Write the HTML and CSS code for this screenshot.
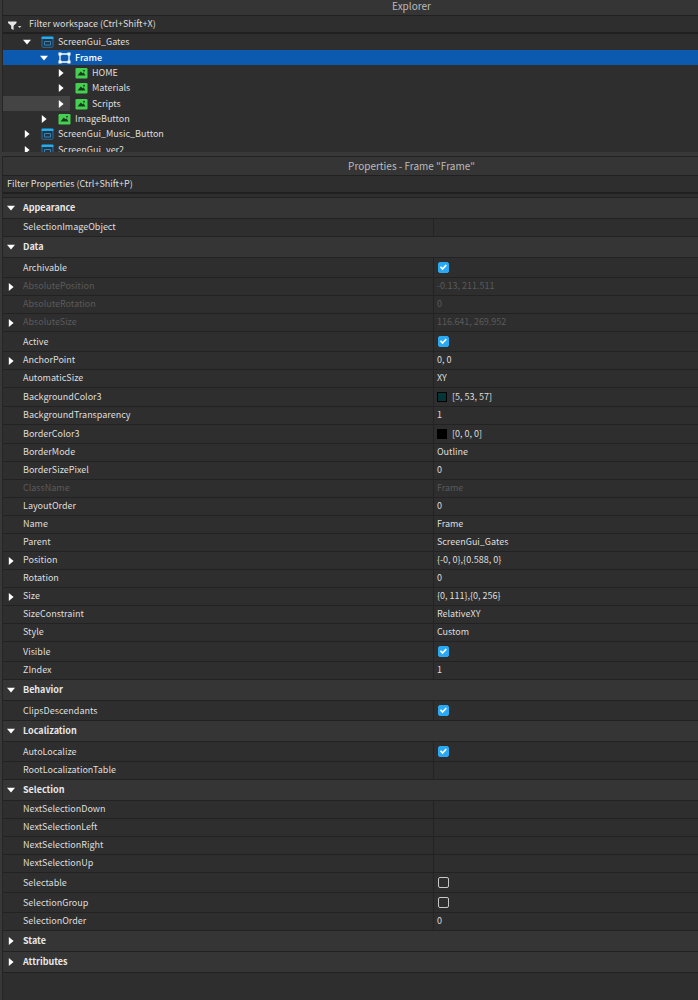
FILE: index.html
```
<!DOCTYPE html>
<html lang="en">
<head>
<meta charset="utf-8">
<title>Explorer and Properties</title>
<link rel="stylesheet" href="styles.css">
</head>
<body>
<svg class="defs" aria-hidden="true">
  <symbol id="down" viewBox="0 0 8 8"><path d="M0 1.800h8L4 6.600z" fill="#fff"/></symbol>
  <symbol id="right" viewBox="0 0 8 8"><path d="M1.800 0v8L6.600 4z" fill="#fff"/></symbol>
  <symbol id="gui" viewBox="0 0 13 12"><path d="M1 3v7.500q0 .8.8.8h9.400q.8 0 .8-.8V3" fill="#27333d" stroke="#296da3"/><path d="M.5 3V1.600q0-1.100 1.100-1.100h9.800q1.100 0 1.100 1.100V3z" fill="#20aef5"/><path d="M3.500 5.500h6v3.500h-6z" fill="none" stroke="#3585bd"/></symbol>
  <symbol id="frame" viewBox="0 0 13 12"><path d="M2 2h9v8H2z" fill="none" stroke="#fff" stroke-width="1.300"/><path d="M.5.500h3v3h-3zM9.500.500h3v3h-3zM.5 8.500h3v3h-3zM9.500 8.500h3v3h-3z" fill="#fff"/></symbol>
  <symbol id="image" viewBox="0 0 13 12"><rect x=".5" y="1" width="12" height="10.500" rx="1.200" fill="#46d052"/><path d="M2.500 8.500 5.800 4.500l1.700 1.700 1-1 2 3.300z" fill="#183b1e"/><circle cx="9" cy="3.700" r=".9" fill="#183b1e"/></symbol>
</svg>
<main class="dock">
  <section class="explorer">
    <h2 class="title">Explorer</h2>
    <div class="filter">
      <button class="funnel" aria-label="Filter options"><svg viewBox="0 0 14 9"><path d="M0 .5h8.500v1.600L5.600 4.800V9L3.200 7.800v-3L0 2.100z" fill="#e4e4e4"/><path d="M9.800 5h3.700l-1.850 2z" fill="#ccc"/></svg></button>
      <input class="search" type="text" aria-label="Filter workspace" placeholder="Filter workspace (Ctrl+Shift+X)">
    </div>
    <ul class="tree" role="tree">
      <li class="node" role="treeitem"><svg class="arrow"><use href="#down"/></svg><svg class="icon"><use href="#gui"/></svg><span>ScreenGui_Gates</span></li>
      <li class="node level-1 selected" role="treeitem" aria-selected="true"><svg class="arrow"><use href="#down"/></svg><svg class="icon"><use href="#frame"/></svg><span>Frame</span></li>
      <li class="node level-2" role="treeitem"><svg class="arrow"><use href="#right"/></svg><svg class="icon"><use href="#image"/></svg><span>HOME</span></li>
      <li class="node level-2" role="treeitem"><svg class="arrow"><use href="#right"/></svg><svg class="icon"><use href="#image"/></svg><span>Materials</span></li>
      <li class="node level-2 hovered" role="treeitem"><svg class="arrow"><use href="#right"/></svg><svg class="icon"><use href="#image"/></svg><span>Scripts</span></li>
      <li class="node level-1" role="treeitem"><svg class="arrow"><use href="#right"/></svg><svg class="icon"><use href="#image"/></svg><span>ImageButton</span></li>
      <li class="node" role="treeitem"><svg class="arrow"><use href="#right"/></svg><svg class="icon"><use href="#gui"/></svg><span>ScreenGui_Music_Button</span></li>
      <li class="node" role="treeitem"><svg class="arrow"><use href="#right"/></svg><svg class="icon"><use href="#gui"/></svg><span>ScreenGui_ver2</span></li>
    </ul>
  </section>
  <section class="properties">
    <h2 class="title title-properties">Properties - Frame "Frame"</h2>
    <div class="filter filter-properties">
      <input class="search" type="text" aria-label="Filter properties" placeholder="Filter Properties (Ctrl+Shift+P)">
    </div>
    <table class="grid">
      <colgroup><col class="col-name"><col></colgroup>
      <tbody>
        <tr class="group"><th colspan="2"><button class="toggle"><svg class="arrow"><use href="#down"/></svg>Appearance</button></th></tr>
        <tr><td>SelectionImageObject</td><td></td></tr>
      </tbody>
      <tbody>
        <tr class="group"><th colspan="2"><button class="toggle"><svg class="arrow"><use href="#down"/></svg>Data</button></th></tr>
        <tr class="tall"><td><label for="archivable">Archivable</label></td><td><input id="archivable" class="check" type="checkbox" checked></td></tr>
        <tr class="locked"><td class="expandable"><svg class="arrow"><use href="#right"/></svg>AbsolutePosition</td><td>-0.13, 211.511</td></tr>
        <tr class="locked"><td>AbsoluteRotation</td><td>0</td></tr>
        <tr class="locked"><td class="expandable"><svg class="arrow"><use href="#right"/></svg>AbsoluteSize</td><td>116.641, 269.952</td></tr>
        <tr class="tall"><td><label for="active">Active</label></td><td><input id="active" class="check" type="checkbox" checked></td></tr>
        <tr><td class="expandable"><svg class="arrow"><use href="#right"/></svg>AnchorPoint</td><td>0, 0</td></tr>
        <tr><td>AutomaticSize</td><td>XY</td></tr>
        <tr class="color"><td>BackgroundColor3</td><td><span class="swatch swatch-teal"></span>[5, 53, 57]</td></tr>
        <tr><td>BackgroundTransparency</td><td>1</td></tr>
        <tr class="color"><td>BorderColor3</td><td><span class="swatch"></span>[0, 0, 0]</td></tr>
        <tr><td>BorderMode</td><td>Outline</td></tr>
        <tr><td>BorderSizePixel</td><td>0</td></tr>
        <tr class="locked"><td>ClassName</td><td>Frame</td></tr>
        <tr><td>LayoutOrder</td><td>0</td></tr>
        <tr><td>Name</td><td>Frame</td></tr>
        <tr><td>Parent</td><td>ScreenGui_Gates</td></tr>
        <tr><td class="expandable"><svg class="arrow"><use href="#right"/></svg>Position</td><td>{-0, 0},{0.588, 0}</td></tr>
        <tr><td>Rotation</td><td>0</td></tr>
        <tr><td class="expandable"><svg class="arrow"><use href="#right"/></svg>Size</td><td>{0, 111},{0, 256}</td></tr>
        <tr><td>SizeConstraint</td><td>RelativeXY</td></tr>
        <tr><td>Style</td><td>Custom</td></tr>
        <tr class="tall"><td><label for="visible">Visible</label></td><td><input id="visible" class="check" type="checkbox" checked></td></tr>
        <tr><td>ZIndex</td><td>1</td></tr>
      </tbody>
      <tbody>
        <tr class="group"><th colspan="2"><button class="toggle"><svg class="arrow"><use href="#down"/></svg>Behavior</button></th></tr>
        <tr class="tall"><td><label for="clips">ClipsDescendants</label></td><td><input id="clips" class="check" type="checkbox" checked></td></tr>
      </tbody>
      <tbody>
        <tr class="group"><th colspan="2"><button class="toggle"><svg class="arrow"><use href="#down"/></svg>Localization</button></th></tr>
        <tr class="tall"><td><label for="localize">AutoLocalize</label></td><td><input id="localize" class="check" type="checkbox" checked></td></tr>
        <tr><td>RootLocalizationTable</td><td></td></tr>
      </tbody>
      <tbody>
        <tr class="group"><th colspan="2"><button class="toggle"><svg class="arrow"><use href="#down"/></svg>Selection</button></th></tr>
        <tr><td>NextSelectionDown</td><td></td></tr>
        <tr><td>NextSelectionLeft</td><td></td></tr>
        <tr><td>NextSelectionRight</td><td></td></tr>
        <tr><td>NextSelectionUp</td><td></td></tr>
        <tr class="tall"><td><label for="selectable">Selectable</label></td><td><input id="selectable" class="check" type="checkbox"></td></tr>
        <tr class="tall"><td><label for="selgroup">SelectionGroup</label></td><td><input id="selgroup" class="check" type="checkbox"></td></tr>
        <tr><td>SelectionOrder</td><td>0</td></tr>
      </tbody>
      <tbody>
        <tr class="group"><th colspan="2"><button class="toggle"><svg class="arrow"><use href="#right"/></svg>State</button></th></tr>
        <tr class="group"><th colspan="2"><button class="toggle"><svg class="arrow"><use href="#right"/></svg>Attributes</button></th></tr>
      </tbody>
    </table>
  </section>
</main>
</body>
</html>
```
FILE: styles.css
```
* {
  box-sizing: border-box;
}

body {
  margin: 0;
  background: #383838;
  color: #dedede;
  font-family: "Noto Sans CJK SC", "Noto Sans", sans-serif;
  font-size: 9px;
  line-height: 14px;
}

button,
input {
  margin: 0;
  padding: 0;
  border: 0;
  background: none;
  color: inherit;
  font: inherit;
}

.defs {
  display: none;
}

.dock {
  display: flex;
  flex-direction: column;
  min-height: 100vh;
}

.explorer,
.properties {
  margin-left: 2px;
  border-left: 1px solid #252525;
  background: #2e2e2e;
}

.properties {
  flex: 1;
  margin-top: 4px;
  border-top: 1px solid #222;
}

.title {
  height: 16px;
  margin: 0;
  padding-left: 122px;
  border-bottom: 1px solid #202020;
  background: #353535;
  color: #bcbcbc;
  font-size: 10px;
  font-weight: 400;
  line-height: 12px;
  text-align: center;
}

.title-properties {
  height: 19px;
  line-height: 18px;
}

.filter {
  display: flex;
  align-items: center;
  gap: 7px;
  height: 18px;
  padding: 0 5px;
  border-bottom: 2px solid #202020;
}

.filter-properties {
  padding: 0 4px;
}

.search {
  flex: 1;
  min-width: 0;
  height: 16px;
  padding-bottom: 1px;
  outline: 0;
}

.search::placeholder {
  color: #dedede;
  opacity: 1;
}

.funnel {
  display: flex;
  width: 14px;
  padding-top: 3px;
}

.funnel svg {
  width: 14px;
  height: 9px;
}

.tree {
  height: 118px;
  margin: 0;
  padding: 0;
  overflow: hidden;
  list-style: none;
}

.node {
  display: flex;
  align-items: center;
  height: 15px;
  padding-left: 20px;
}

.node:nth-child(3n + 1) {
  height: 16px;
}

.arrow {
  flex: none;
  width: 8px;
  height: 8px;
}

.node .icon {
  flex: none;
  width: 13px;
  height: 12px;
  margin-left: 10px;
  margin-right: 4px;
}

.level-1 {
  padding-left: 37px;
}

.level-2 {
  padding-left: 54px;
}

.selected {
  background: #0b5aaf;
  color: #fff;
  font-weight: 500;
}

.hovered {
  background: linear-gradient(#444, #444) no-repeat 0 0 / 67px 100%;
}

.grid {
  width: 100%;
  margin-top: 3px;
  border-top: 1px solid #222;
  border-collapse: separate;
  border-spacing: 0;
  table-layout: fixed;
}

.col-name {
  width: 62%;
}

.grid td,
.grid th {
  height: 18px;
  padding: 0;
  border-bottom: 1px solid #222;
  line-height: 14px;
  text-align: left;
  vertical-align: middle;
  white-space: nowrap;
}

.grid td {
  padding-bottom: 1px;
}

.grid td:first-child {
  padding-left: 20px;
  border-right: 1px solid #232323;
}

.grid td:last-child {
  padding-left: 3px;
}

.grid .expandable:first-child {
  padding-left: 4px;
}

.expandable .arrow {
  margin-right: 8px;
  vertical-align: middle;
}

.grid .group th {
  height: 21px;
  background: #353535;
}

.grid .tall td {
  height: 20px;
  padding-bottom: 0;
}

.grid .color td {
  height: 19px;
}

.locked {
  color: #5a5a5a;
}

.toggle {
  display: flex;
  align-items: center;
  gap: 8px;
  width: 100%;
  padding-left: 4px;
  color: #e8e8e8;
  font-weight: 700;
}

.check {
  display: block;
  position: relative;
  width: 11px;
  height: 11px;
  margin-left: 1px;
  border: 1px solid #c8c8c8;
  border-radius: 2px;
  appearance: none;
}

.check:checked {
  border-color: #29a9f5;
  background: #29a9f5;
}

.check:checked::before {
  content: "";
  position: absolute;
  inset: 1px;
  background: #fff;
  clip-path: polygon(0 48%, 16% 32%, 38% 54%, 84% 6%, 100% 22%, 38% 88%);
}

.swatch {
  display: inline-block;
  width: 10px;
  height: 10px;
  margin-right: 5px;
  border: 1px solid #000;
  background: #000;
  vertical-align: middle;
}

.swatch-teal {
  background: #053539;
}
```
